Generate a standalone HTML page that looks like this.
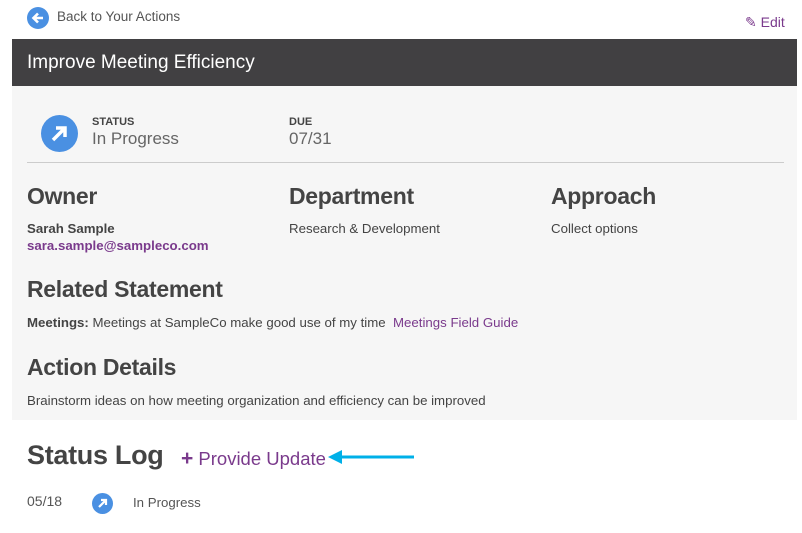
<!DOCTYPE html>
<html><head><style>
*{margin:0;padding:0;box-sizing:border-box}
body{width:802px;height:533px;background:#fff;font-family:"Liberation Sans",sans-serif;color:#444;position:relative;overflow:hidden}
.a{position:absolute;white-space:nowrap}
h2{position:absolute;font-size:23px;font-weight:bold;color:#444;white-space:nowrap;letter-spacing:-0.3px}
.s{font-size:13.25px;color:#444}
.p{color:#7a3a8c}
</style></head><body>
<svg class="a" style="left:27px;top:7px" width="22" height="22" viewBox="0 0 22 22"><circle cx="11" cy="11" r="11" fill="#4a90e2"/><path d="M16 11H7M11 6.5L6.5 11 11 15.5" stroke="#fff" stroke-width="2.6" fill="none"/></svg>
<div class="a" style="left:57px;top:9px;font-size:13.5px;color:#555">Back to Your Actions</div>
<div class="a p" style="left:745px;top:14px;font-size:14px">&#9998; Edit</div>
<div class="a" style="left:12px;top:39px;width:785px;height:47px;background:#414042"></div>
<div class="a" style="left:27px;top:52px;font-size:19px;color:#fff">Improve Meeting Efficiency</div>
<div class="a" style="left:12px;top:86px;width:785px;height:334px;background:#f6f6f6"></div>
<svg class="a" style="left:41px;top:115px" width="37" height="37" viewBox="0 0 37 37"><circle cx="18.5" cy="18.5" r="18.5" fill="#4a90e2"/><path d="M12 25L24 13M15 13H24V22" stroke="#fff" stroke-width="3.5" fill="none"/></svg>
<div class="a" style="left:92px;top:116px;font-size:11px;font-weight:bold;color:#444">STATUS</div>
<div class="a" style="left:92px;top:129px;font-size:17px;color:#666">In Progress</div>
<div class="a" style="left:289px;top:116px;font-size:11px;font-weight:bold;color:#444">DUE</div>
<div class="a" style="left:289px;top:129px;font-size:17px;color:#666">07/31</div>
<div class="a" style="left:27px;top:162px;width:757px;height:1px;background:#ccc"></div>
<h2 style="left:27px;top:183px">Owner</h2>
<h2 style="left:289px;top:183px">Department</h2>
<h2 style="left:551px;top:183px">Approach</h2>
<div class="a s" style="left:27px;top:221px;font-weight:bold">Sarah Sample</div>
<div class="a s p" style="left:27px;top:238px;font-weight:bold">sara.sample@sampleco.com</div>
<div class="a s" style="left:289px;top:221px">Research &amp; Development</div>
<div class="a s" style="left:551px;top:221px">Collect options</div>
<h2 style="left:27px;top:276px">Related Statement</h2>
<div class="a s" style="left:27px;top:315px"><b>Meetings:</b> Meetings at SampleCo make good use of my time &nbsp;<span class="p">Meetings Field Guide</span></div>
<h2 style="left:27px;top:354px">Action Details</h2>
<div class="a s" style="left:27px;top:393px">Brainstorm ideas on how meeting organization and efficiency can be improved</div>
<h2 style="left:27px;top:440px;font-size:27px">Status Log</h2>
<div class="a p" style="left:181px;top:447px;font-size:18.5px"><b style="font-size:21px">+</b>&nbsp;Provide Update</div>
<svg class="a" style="left:328px;top:449px" width="88" height="16"><path d="M12 8H86" stroke="#00b0e8" stroke-width="3"/><path d="M0 8L14 1V15Z" fill="#00b0e8"/></svg>
<div class="a" style="left:27px;top:493px;font-size:14px;color:#555">05/18</div>
<svg class="a" style="left:92px;top:493px" width="21" height="21" viewBox="0 0 21 21"><circle cx="10.5" cy="10.5" r="10.5" fill="#4a90e2"/><path d="M7 14L14 7M9 7H14V12" stroke="#fff" stroke-width="2.2" fill="none"/></svg>
<div class="a s" style="left:133px;top:495px;color:#555">In Progress</div>
</body></html>
